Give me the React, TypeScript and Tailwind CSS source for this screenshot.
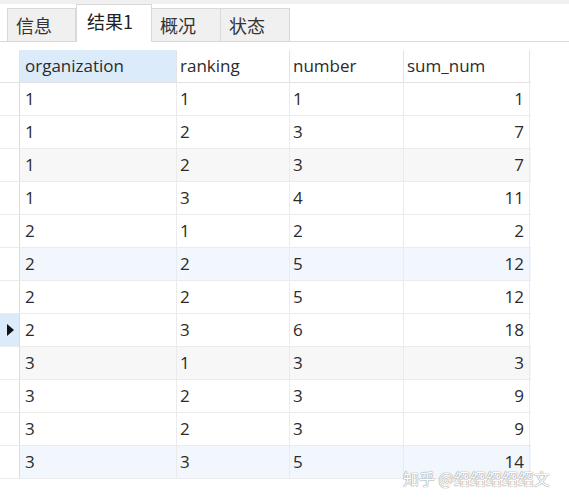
const tabs = ['信息', '结果1', '概况', '状态'];

const rows: [string, string, string, string][] = [
  ['1', '1', '1', '1'],
  ['1', '2', '3', '7'],
  ['1', '2', '3', '7'],
  ['1', '3', '4', '11'],
  ['2', '1', '2', '2'],
  ['2', '2', '5', '12'],
  ['2', '2', '5', '12'],
  ['2', '3', '6', '18'],
  ['3', '1', '3', '3'],
  ['3', '2', '3', '9'],
  ['3', '2', '3', '9'],
  ['3', '3', '5', '14'],
];

const rowBg = (i: number) => {
  if (i === 5 || i === 11) return 'bg-[#f1f7fd]';
  if (i === 2 || i === 8) return 'bg-[#f7f7f7]';
  return 'bg-white';
};

const font = { fontFamily: '"Open Sans", "Noto Sans CJK SC", sans-serif' };

export default function App() {
  return (
    <div className="relative h-[501px] w-[569px] overflow-hidden bg-white text-[17px] text-[#2b2b2b]" style={font}>
      <div className="h-[4px] bg-[#f0f0f0]" />
      <div
        className="flex h-[38px] items-end border-b border-[#d9d9d9] bg-white pl-[7px] text-[18px]"
        style={{ fontFamily: '"Noto Sans CJK SC", sans-serif' }}
      >
        {tabs.map((t, i) =>
          i === 1 ? (
            <div
              key={t}
              className="-mb-px flex h-[38px] w-[76px] items-center border border-b-0 border-[#d9d9d9] bg-white pb-[5px] pl-[10px] text-[#222]"
            >
              {t}
            </div>
          ) : (
            <div
              key={t}
              className="flex h-[33px] w-[69px] items-center border border-b-0 border-l-0 border-[#d9d9d9] bg-[#f0f0f0] pl-[8px] text-[#333] first:border-l"
            >
              {t}
            </div>
          )
        )}
      </div>

      <div className="mt-[8px] w-[531px]">
        <div className="flex h-[33px] border-b border-[#e3e3e3]">
          <div className="w-[20px] border-r border-[#e3e3e3] bg-white" />
          <div className="flex w-[157px] items-center border-r border-[#e3e3e3] bg-[#dcebfa] pl-[5px]">organization</div>
          <div className="flex w-[113px] items-center border-r border-[#e3e3e3] pl-[3px]">ranking</div>
          <div className="flex w-[114px] items-center border-r border-[#e3e3e3] pl-[3px]">number</div>
          <div className="flex w-[126px] items-center border-r border-[#e3e3e3] pl-[3px]">sum_num</div>
        </div>
        {rows.map((r, i) => (
          <div key={i} className={`flex h-[33px] border-b border-[#ebebeb] ${rowBg(i)}`}>
            <div
              className={`flex w-[20px] items-center justify-center border-r border-[#dcdcdc] ${
                i === 7 ? 'bg-[#dcebfa]' : 'bg-white'
              }`}
            >
              {i === 7 && (
                <svg width="8" height="12" viewBox="0 0 8 12">
                  <path d="M1 0 L8 6 L1 12 Z" fill="#111" />
                </svg>
              )}
            </div>
            <div className="flex w-[157px] items-center border-r border-[#ebebeb] pl-[5px]">{r[0]}</div>
            <div className="flex w-[113px] items-center border-r border-[#ebebeb] pl-[3px]">{r[1]}</div>
            <div className="flex w-[114px] items-center border-r border-[#ebebeb] pl-[3px]">{r[2]}</div>
            <div className="flex w-[126px] items-center justify-end border-r border-[#ebebeb] pr-[5px]">{r[3]}</div>
          </div>
        ))}
      </div>

      <div
        className="absolute left-[403px] top-[466px] text-[16px] text-white [text-shadow:0_0_1px_#888,0_0_1px_#888]"
        style={{ fontFamily: '"Noto Sans CJK SC", sans-serif' }}
      >
        知乎 @绍绍绍绍绍文
      </div>
    </div>
  );
}
